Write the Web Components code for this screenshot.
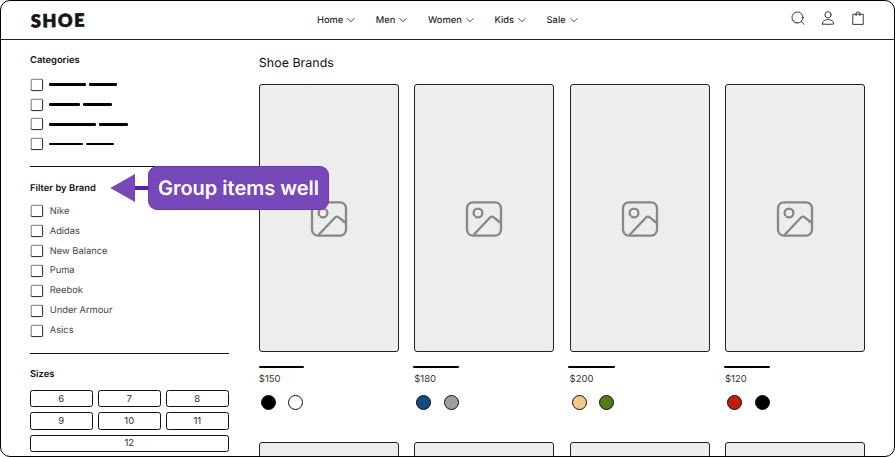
<!DOCTYPE html>
<html lang="en">
<head>
<meta charset="utf-8">
<title>Shoe Brands</title>
<style>
html,body{margin:0;background:#fff}
body{width:895px;height:457px;overflow:hidden;font-family:Inter,"Liberation Sans",sans-serif;color:#111;text-rendering:geometricPrecision}
</style>
</head>
<body>
<shoe-page></shoe-page>
<script>
const define = (name, render) => customElements.define(name, class extends HTMLElement {
  constructor() { super(); this.attachShadow({ mode: 'open' }); }
  connectedCallback() { this.shadowRoot.innerHTML = render(this); }
});

define('shoe-logo', () => `<style>
:host{display:block;font:800 18px/22px Lato,"Open Sans",sans-serif;letter-spacing:1.5px;color:#151515}
span{display:inline-block;-webkit-text-stroke:.6px #151515;margin-left:1px;transform:rotate(-.8deg)}</style><span>SHOE</span>`);

define('nav-item', () => `<style>
:host{display:flex;align-items:center;gap:4px;font-size:9.3px;line-height:14px;font-weight:500;color:#2a2a2a}
svg{display:block;width:8px;height:6px}
span{padding-top:1px}</style><span><slot></slot></span>
<svg viewBox="0 0 8 6" fill="none" stroke="#333" stroke-width=".85"><path d="M.5 1.2 4 4.8 7.5 1.2"/></svg>`);

const icons = {
  search: '<circle cx="6.5" cy="6.5" r="5.5"/><path d="m10.3 10.5 2.7 2.8"/><path d="M1.3 8.5c.8 2.1 2.8 3.8 5.2 3.5" opacity=".5"/>',
  user: '<circle cx="7" cy="3.8" r="3.1"/><path d="M1.4 13c-.5-2.5 2.5-4.4 5.6-4.4s6 1.8 5.6 4.4c-3 .5-8 .4-11.2 0Z"/>',
  bag: '<path d="M2.3 3.2h9.9v10.2H2.1Z"/><path d="M5.1 4.6V2.2C5.2.6 8.8.5 8.9 2.2v2.4"/>'
};
define('tool-icon', el => `<style>:host{display:block}svg{display:block;width:14px;height:14px;overflow:visible}</style>
<svg viewBox="0 0 14 14" fill="none" stroke="#222" stroke-width=".9" stroke-linejoin="round" stroke-linecap="round">${icons[el.getAttribute('name')]}</svg>`);

define('site-header', () => `<style>
:host{display:grid;grid-template-columns:286px 1fr auto;align-items:center;box-sizing:border-box;height:39px;padding:0 29px 0 29px;border-bottom:1px solid #222}
nav{display:flex;gap:20.6px;margin-left:1px}
.tools{display:flex;gap:16px;margin-bottom:5px}</style>
<shoe-logo></shoe-logo>
<nav>${['Home', 'Men', 'Women', 'Kids', 'Sale'].map(t => `<nav-item>${t}</nav-item>`).join('')}</nav>
<div class="tools"><tool-icon name="search"></tool-icon><tool-icon name="user"></tool-icon><tool-icon name="bag"></tool-icon></div>`);

define('check-row', el => {
  const bars = el.getAttribute('bars');
  return `<style>
:host{display:flex;align-items:center;height:19.9px;font-size:9.35px;line-height:14px;color:#444}
svg{display:block;width:14px;height:14px;margin:0 ${bars ? 4.3 : 5.4}px 0 .3px;flex:none}
span{padding-top:1px}
i{display:block;height:2.4px;border-radius:1.2px;background:#000;margin-right:3px}</style>
<svg viewBox="0 0 14 14" fill="none" stroke="#222"><path d="M1.2 11.8V2.2Q1.2 1.3 2 1.3h9.8" stroke-width=".8" stroke="#555"/><path d="M1.2 11.6q0 1 .9 1h9.6q.9 0 .9-.9V2.2q0-.8-.8-.9" stroke-width="1"/></svg>
${bars ? bars.split(',').map(w => `<i style="width:${w}px"></i>`).join('') : '<span><slot></slot></span>'}`;
});

define('filter-group', el => `<style>
:host{display:block}
h3{margin:0;padding-top:.8px;font-size:9.4px;line-height:14px;font-weight:600;color:#111}
.body{padding-top:6.2px}
:host([tight]) .body{padding-top:5.6px}</style>
<h3>${el.getAttribute('heading')}</h3><div class="body"><slot></slot></div>`);

define('size-grid', () => `<style>
:host{display:grid;grid-template-columns:repeat(3,1fr);gap:5px 5.4px;padding-top:2.2px}
div{box-sizing:border-box;height:17.3px;padding-top:1px;border:1px solid #111;border-radius:2.5px;display:flex;align-items:center;justify-content:center;font-size:9.5px;color:#333}
div:last-child{grid-column:1/-1}</style>
${[6, 7, 8, 9, 10, 11, 12].map(n => `<div>${n}</div>`).join('')}`);

define('side-filters', () => `<style>
:host{display:block;width:198.6px}
hr{margin:0;border:0;height:1px;background:#111}
.a{margin-top:11.8px;margin-bottom:13.9px}.b{margin-top:12px;margin-bottom:13.8px}</style>
<filter-group heading="Categories">
${['37,28.5', '31.5,28.5', '47.5,28.5', '34,28.5'].map(b => `<check-row bars="${b}"></check-row>`).join('')}
</filter-group><hr class="a">
<filter-group tight heading="Filter by Brand">
${['Nike', 'Adidas', 'New Balance', 'Puma', 'Reebok', 'Under Armour', 'Asics'].map(t => `<check-row>${t}</check-row>`).join('')}
</filter-group><hr class="b">
<filter-group tight heading="Sizes"><size-grid></size-grid></filter-group>`);

define('image-tile', () => `<style>
:host{display:flex;align-items:center;justify-content:center;box-sizing:border-box;height:268px;border:1px solid #222;border-radius:3px;background:#ededed}
svg{display:block;width:38px;height:38px;margin-top:1.5px}</style>
<svg viewBox="0 0 38 38" fill="none" stroke="#878787" stroke-width="2.3" stroke-linejoin="round">
<filter id="r" x="-10%" y="-10%" width="120%" height="120%"><feTurbulence type="fractalNoise" baseFrequency=".45" numOctaves="2" seed="4"/><feDisplacementMap in="SourceGraphic" scale="1.8" xChannelSelector="R" yChannelSelector="G"/></filter>
<g filter="url(#r)"><rect x="2" y="2.3" width="34" height="33.4" rx="6"/><circle cx="13" cy="13" r="4.4"/><path d="M8.5 35 24.5 18Q26.7 15.4 29 17.6L36 23"/></g></svg>`);

define('product-card', el => {
  const colors = (el.getAttribute('colors') || '').split(',').filter(Boolean);
  return `<style>
:host{display:block;height:357.5px}
.bar{height:2.6px;width:${el.hasAttribute('first') ? 45 : 46.5}px;margin:13.4px 0 0 ${el.hasAttribute('first') ? 0 : -1.2}px;background:#000;border-radius:1px}
.price{font-size:9.5px;line-height:14px;margin-top:4.4px;color:#333}
.dots{display:flex;gap:12.4px;margin:8.4px 0 0 2.3px}
.dots i{box-sizing:border-box;width:15px;height:15px;border:1.2px solid #111;border-radius:50%}</style>
<image-tile></image-tile>${el.hasAttribute('price') ? `<div class="bar"></div><div class="price">${el.getAttribute('price')}</div>
<div class="dots">${colors.map(c => `<i style="background:${c}"></i>`).join('')}</div>` : ''}`;
});

define('product-list', () => `<style>
:host{display:block;flex:1}
h2{margin:0 0 12.8px;font-size:12.4px;line-height:18px;font-weight:400;letter-spacing:.05px;color:#111}
.grid{display:grid;grid-template-columns:repeat(4,1fr);column-gap:15.4px}</style>
<h2>Shoe Brands</h2><div class="grid">
<product-card first price="$150" colors="#000,#fff"></product-card>
<product-card price="$180" colors="#134a86,#9f9f9f"></product-card>
<product-card price="$200" colors="#f2ca87,#527d12"></product-card>
<product-card price="$120" colors="#c51d0b,#000"></product-card>
${'<product-card></product-card>'.repeat(4)}</div>`);

define('callout-label', () => `<style>
:host{position:absolute;left:110px;top:165.5px;display:flex;align-items:center}
svg{display:block;width:38px;height:30px}
div{box-sizing:border-box;width:181px;height:44.5px;border-radius:9px;background:#7748b9;border:1px solid #6d38b4;color:#fff;font-size:20px;font-weight:600;display:flex;align-items:center;justify-content:center;white-space:nowrap}</style>
<svg viewBox="0 0 38 30"><path d="M24 15h14" stroke="#6219b0" stroke-width="4"/><path d="M.3 15 25 1v28Z" fill="#7748b9"/></svg>
<div><span><slot></slot></span></div>`);

define('shoe-page', () => `<style>
:host{display:block;position:relative;box-sizing:border-box;width:895px;height:457px;overflow:hidden;border:1px solid #000;border-radius:10px;background:#fff}
main{display:flex;gap:30.2px;padding:13.7px 29px 0 29px}
side-filters{flex:none}
callout-label{margin:-1px 0 0 -1px}</style>
<site-header></site-header>
<main><side-filters></side-filters><product-list></product-list></main>
<callout-label>Group items well</callout-label>`);
</script>
</body>
</html>
